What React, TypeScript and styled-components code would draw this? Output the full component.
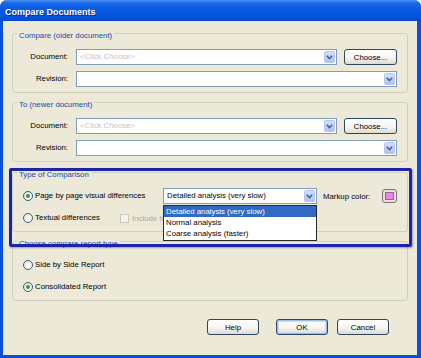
import React from 'react';
import styled, { createGlobalStyle, css } from 'styled-components';

const GlobalStyle = createGlobalStyle`
  html, body {
    margin: 0;
    padding: 0;
    background: #fff;
  }
  body {
    font-family: "Liberation Sans", Arial, sans-serif;
    font-size: 7.8px;
    color: #000;
  }
  * {
    box-sizing: border-box;
  }
`;

const App = () => (
  <>
    <GlobalStyle />
    <Window>
      <TitleBar>Compare Documents</TitleBar>
      <Body>
        <GroupBox $top={0}>
          <Legend>Compare (older document)</Legend>
          <FieldRows>
            <FieldRow>
              <FieldLabel>Document:</FieldLabel>
              <ComboBox text="<Click Choose>" muted />
              <Button $w={53} $ml={7}>Choose...</Button>
            </FieldRow>
            <FieldRow>
              <FieldLabel>Revision:</FieldLabel>
              <ComboBox />
            </FieldRow>
          </FieldRows>
        </GroupBox>

        <GroupBox $top={1}>
          <Legend>To (newer document)</Legend>
          <FieldRows>
            <FieldRow>
              <FieldLabel>Document:</FieldLabel>
              <ComboBox text="<Click Choose>" muted />
              <Button $w={53} $ml={7}>Choose...</Button>
            </FieldRow>
            <FieldRow>
              <FieldLabel>Revision:</FieldLabel>
              <ComboBox />
            </FieldRow>
          </FieldRows>
        </GroupBox>

        <GroupBox $top={2}>
          <Legend>Type of Comparison</Legend>
          <OptionRows>
            <OptionRow>
              <Radio label="Page by page visual differences" checked width={140} />
              <ComboWrap>
                <ComboBox text="Detailed analysis (very slow)" width={154} />
                <DropList>
                  <DropItem $selected>Detailed analysis (very slow)</DropItem>
                  <DropItem>Normal analysis</DropItem>
                  <DropItem>Coarse analysis (faster)</DropItem>
                </DropList>
              </ComboWrap>
              <MarkupLabel>Markup color:</MarkupLabel>
              <Swatch>
                <SwatchFill />
              </Swatch>
            </OptionRow>
            <OptionRow>
              <Radio label="Textual differences" width={97} />
              <CheckOption>
                <CheckBox />
                {/* the rest of this label is hidden behind the open list */}
                <CheckText>Include formatting</CheckText>
              </CheckOption>
            </OptionRow>
          </OptionRows>
        </GroupBox>

        <GroupBox $top={1}>
          <Legend>Choose compare report type</Legend>
          <OptionRows>
            <OptionRow>
              <Radio label="Side by Side Report" />
            </OptionRow>
            <OptionRow>
              <Radio label="Consolidated Report" checked />
            </OptionRow>
          </OptionRows>
        </GroupBox>

        <ButtonBar>
          <Button $w={52} $mr={17}>Help</Button>
          <Button $w={52} $mr={9} $default>OK</Button>
          <Button $w={52}>Cancel</Button>
        </ButtonBar>
      </Body>
      <Highlight />
    </Window>
  </>
);

interface ComboBoxProps {
  text?: string;
  muted?: boolean;
  width?: number;
}

const ComboBox = ({ text = '', muted, width }: ComboBoxProps) => (
  <Combo $w={width}>
    <ComboText $muted={muted}>{text}</ComboText>
    <ComboArrow>
      <svg width="7" height="5" viewBox="0 0 7 5">
        <path d="M0.8 0.8 L3.5 3.6 L6.2 0.8" fill="none" stroke="#4d6185" strokeWidth="1.5" />
      </svg>
    </ComboArrow>
  </Combo>
);

interface RadioProps {
  label: string;
  checked?: boolean;
  width?: number;
}

const Radio = ({ label, checked, width }: RadioProps) => (
  <Option $w={width}>
    <RadioDot $checked={checked} />
    {label}
  </Option>
);

export default App;

// Window frame
const Window = styled.div`
  position: relative;
  width: 421px;
  height: 358px;
  display: flex;
  flex-direction: column;
  background: #0b50da;
  border-radius: 7px 7px 0 0;
  overflow: hidden;
`;

const TitleBar = styled.div`
  flex: none;
  height: 21px;
  display: flex;
  align-items: center;
  padding: 2px 0 0 5px;
  background: linear-gradient(180deg, #4a94f2 0px, #1a68e8 3px, #0a5be3 9px, #0553de 16px, #0346d0 21px);
  color: #fff;
  font-size: 9px;
  font-weight: bold;
  text-shadow: 1px 1px 0 #0b2a8c;
`;

const Body = styled.div`
  flex: 1;
  display: flex;
  flex-direction: column;
  margin: 0 4px 3px 3px;
  padding: 4px 9px 0 9px;
  background: #ece9d8;
`;

// Group boxes
const GroupBox = styled.fieldset<{ $top: number }>`
  margin: ${(p) => p.$top}px 0 0;
  padding: 8px 0 5px;
  min-width: 0;
  border: 1px solid #d0d0bf;
  border-radius: 3px;
`;

const Legend = styled.legend`
  margin-left: 4px;
  padding: 6px 2px 0;
  line-height: 10px;
  color: #1b4aa8;
`;

const FieldRows = styled.div`
  display: flex;
  flex-direction: column;
  gap: 6px;
  padding-right: 10px;
`;

const FieldRow = styled.div`
  display: flex;
  align-items: center;
  height: 16px;
`;

const FieldLabel = styled.span`
  flex: none;
  width: 55px;
  margin-right: 8px;
  text-align: right;
  line-height: 16px;
`;

// Combo box
const Combo = styled.div<{ $w?: number }>`
  display: flex;
  height: 16px;
  padding: 1px;
  background: #fff;
  border: 1px solid #7f9db9;
  ${(p) => (p.$w ? css`width: ${p.$w}px; flex: none;` : css`flex: 1;`)}
`;

const ComboText = styled.span<{ $muted?: boolean }>`
  flex: 1;
  padding-left: 2px;
  line-height: 12px;
  white-space: nowrap;
  overflow: hidden;
  color: ${(p) => (p.$muted ? '#c4c4c4' : '#000')};
`;

const ComboArrow = styled.span`
  flex: none;
  width: 11px;
  display: flex;
  align-items: center;
  justify-content: center;
  border: 1px solid #b3c6ef;
  border-radius: 2px;
  background: linear-gradient(180deg, #d3e0fc 0%, #bccff8 55%, #aec3f2 100%);
`;

const ComboWrap = styled.div`
  position: relative;
  flex: none;
`;

const DropList = styled.div`
  position: absolute;
  z-index: 2;
  top: calc(100% + 1px);
  left: 0;
  width: 100%;
  padding-bottom: 1px;
  background: #fff;
  border: 1px solid #2a2a2a;
`;

const DropItem = styled.div<{ $selected?: boolean }>`
  height: 11px;
  padding-left: 2px;
  line-height: 11px;
  white-space: nowrap;
  background: ${(p) => (p.$selected ? '#316ac5' : 'transparent')};
  color: ${(p) => (p.$selected ? '#fff' : '#000')};
`;

// Options
const OptionRows = styled.div`
  display: flex;
  flex-direction: column;
  gap: 6px;
  padding: 0 10px;
`;

const OptionRow = styled.div`
  display: flex;
  align-items: center;
  height: 16px;
`;

const Option = styled.label<{ $w?: number }>`
  flex: none;
  display: flex;
  align-items: center;
  gap: 2px;
  width: ${(p) => (p.$w ? `${p.$w}px` : 'auto')};
  line-height: 16px;
  white-space: nowrap;
`;

const RadioDot = styled.span<{ $checked?: boolean }>`
  flex: none;
  width: 10px;
  height: 10px;
  display: flex;
  align-items: center;
  justify-content: center;
  border: 1px solid #3d5f80;
  border-radius: 50%;
  background: radial-gradient(circle at 65% 65%, #ffffff 0%, #f1f0ea 45%, #d6d4c8 100%);

  &::after {
    content: '';
    display: ${(p) => (p.$checked ? 'block' : 'none')};
    width: 4px;
    height: 4px;
    border-radius: 50%;
    background: #2f9a34;
  }
`;

const CheckOption = styled.span`
  display: flex;
  align-items: center;
  gap: 3px;
  color: #aca899;
  white-space: nowrap;
`;

const CheckBox = styled.span`
  flex: none;
  width: 9px;
  height: 9px;
  border: 1px solid #cac8bb;
  background: #f4f3ee;
`;

const CheckText = styled.span`
  width: 31px;
  overflow: hidden;
`;

const MarkupLabel = styled.span`
  margin-left: 6px;
  white-space: nowrap;
`;

const Swatch = styled.span`
  margin-left: auto;
  width: 15px;
  height: 14px;
  padding: 2px;
  border: 1px solid #767676;
  border-radius: 3px;
  background: #e4e2d8;
`;

const SwatchFill = styled.span`
  display: block;
  width: 100%;
  height: 100%;
  border: 1px solid #8a6f8a;
  background: #f27cf0;
`;

// Buttons
const ButtonBar = styled.div`
  display: flex;
  justify-content: flex-end;
  margin-top: 18px;
  padding-right: 19px;
`;

const Button = styled.button<{ $w: number; $ml?: number; $mr?: number; $default?: boolean }>`
  flex: none;
  width: ${(p) => p.$w}px;
  height: 16px;
  margin: 0 ${(p) => p.$mr ?? 0}px 0 ${(p) => p.$ml ?? 0}px;
  padding: 0;
  font: inherit;
  color: #000;
  border: 1px solid #2e4660;
  border-radius: 3px;
  background: linear-gradient(180deg, #ffffff 0%, #f6f5f1 55%, #dedbd0 100%);
  ${(p) => p.$default && css`
    box-shadow: inset 0 0 0 1px #9dbbec, inset 0 0 0 2px #cfdff8;
  `}
`;

// Annotation drawn over the dialog
const Highlight = styled.div`
  position: absolute;
  z-index: 3;
  left: 9px;
  top: 168px;
  width: 403px;
  height: 79px;
  border: 3px solid #1e24a8;
  border-radius: 2px;
  box-shadow: 1px 1px 2px rgba(20, 20, 80, 0.35);
  pointer-events: none;
`;
